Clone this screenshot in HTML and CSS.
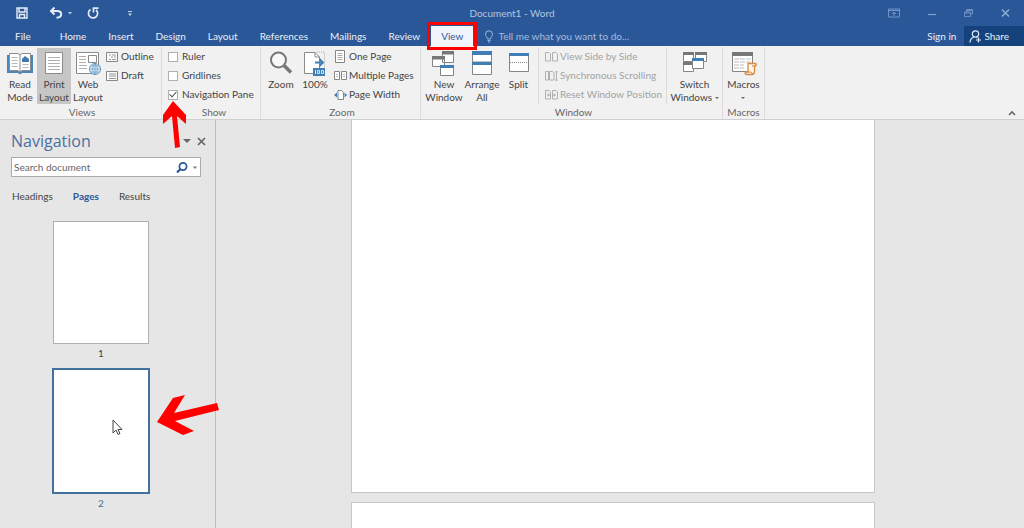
FILE: index.html
```html
<!DOCTYPE html>
<html lang="en">
<head>
<meta charset="utf-8">
<title>Document1 - Word</title>
<link rel="stylesheet" href="styles.css">
</head>
<body>
<div class="app">
<header class="titlebar">
  <div class="quick">
    <button class="bare" aria-label="Save"><svg width="12" height="12" viewBox="0 0 12 12" fill="none" stroke="#e6edf7" stroke-width="1.4"><path d="M1 1H11V11H1ZM3 1V5H9V1M3.500 11V7.500H8.500V11"/></svg></button>
    <button class="bare undo" aria-label="Undo"><svg width="24" height="12" viewBox="0 0 24 12"><path d="M5.500 .5L2 4L5.500 7.500M2.500 4H8Q12.200 4 12.200 7Q12.200 10.500 7.500 10.800" fill="none" stroke="#e6edf7" stroke-width="2"/><path d="M19 5H23L21 7.500Z" fill="#b9cbe6"/></svg></button>
    <button class="bare redo" aria-label="Repeat"><svg width="12" height="12" viewBox="0 0 12 12"><path d="M3.500 2.500A4.600 4.600 0 1 0 9 2.800M6.500 5.500V1.200H11.500" fill="none" stroke="#e6edf7" stroke-width="1.7"/></svg></button>
    <button class="bare more" aria-label="Customize toolbar"><svg width="6" height="7" viewBox="0 0 6 7" fill="#c4d3ea"><path d="M1 1H5V2H1ZM1 3.500H5L3 6Z"/></svg></button>
  </div>
  <div class="doc-name">Document1 - Word</div>
  <div class="window-buttons">
    <button class="bare" aria-label="Ribbon display options"><svg width="12" height="10" viewBox="0 0 12 10" fill="none" stroke="#7395c8"><path d="M.5 1H11.500V9H.5ZM1 2.500H11M6 8V4M4 6L6 4L8 6"/></svg></button>
    <button class="bare" aria-label="Minimize"><svg width="8" height="10" viewBox="0 0 8 10"><path d="M0 6.500H8" stroke="#7f9fce" stroke-width="1.200"/></svg></button>
    <button class="bare" aria-label="Restore"><svg width="9" height="10" viewBox="0 0 9 10" fill="none" stroke="#6b8ec4"><path d="M.5 4H6.500V8.500H.5ZM.5 5H6.500M2.500 4V1.500H8.500V6H7M2.500 2.500H8.500"/></svg></button>
    <button class="bare" aria-label="Close"><svg width="9" height="10" viewBox="0 0 9 10"><path d="M1 1.500L8 8.500M8 1.500L1 8.500" stroke="#8facd6" stroke-width="1.500"/></svg></button>
  </div>
</header>

<nav class="tabs">
  <button class="tab file">File</button>
  <button class="tab">Home</button>
  <button class="tab">Insert</button>
  <button class="tab">Design</button>
  <button class="tab">Layout</button>
  <button class="tab">References</button>
  <button class="tab">Mailings</button>
  <button class="tab">Review</button>
  <button class="tab active">View</button>
  <label class="tell"><svg width="10" height="13" viewBox="0 0 10 13" fill="none" stroke="#9db7de"><path d="M3.500 9C3.500 7 1.500 6.500 1.500 4.300A3.500 3.500 0 0 1 8.500 4.300C8.500 6.500 6.500 7 6.500 9ZM3.500 10.500H6.500M4 12H6"/></svg><input type="text" placeholder="Tell me what you want to do..." aria-label="Tell me what you want to do"></label>
  <a class="signin" href="#">Sign in</a>
  <button class="share"><svg width="13" height="13" viewBox="0 0 13 13" fill="none" stroke="#e6edf7" stroke-width="1.200"><circle cx="6.500" cy="4" r="3.200"/><path d="M1 12.500Q1.200 8.500 4.800 7M7.500 7.500L8.500 8M9.500 7.500V12.500M7 10H12"/></svg>Share</button>
</nav>

<section class="ribbon">
  <div class="group views">
    <div class="tools">
      <button class="big"><svg viewBox="0 0 28 28" width="28" height="28"><path d="M1 5H3V20H12L14 21.500L16 20H25V5H27V23H16L14 24.500L12 23H1Z" fill="#4a86b8"/><path d="M3.500 3.500H12L14 5L16 3.500H24.500V20.500H16L14 22L12 20.500H3.500Z" fill="#fff" stroke="#8c8c8c"/><path d="M14 5V21" stroke="#8c8c8c"/><path d="M5.500 7.500H11.500M5.500 10.500H11.500M5.500 13.500H11.500M5.500 16.500H11.500M16.500 14.500H22.500M16.500 17.500H22.500" stroke="#b8b8b8"/><path d="M16 12V9L19 6L23 9V12Z" fill="#3f79ad"/></svg><span>Read<br>Mode</span></button>
      <button class="big selected"><svg viewBox="0 0 28 28" width="28" height="28"><path d="M5.500 2.500H22.500V23.500H5.500Z" fill="#fff" stroke="#8a8a8a"/><path d="M8 7.500H20M8 10.500H20M8 13.500H20M8 16.500H20M8 19.500H20" stroke="#b0b0b0"/></svg><span>Print<br>Layout</span></button>
      <button class="big"><svg viewBox="0 0 28 28" width="28" height="28"><path d="M2.500 2.500H24.500V23.500H2.500Z" fill="#fff" stroke="#8a8a8a"/><path d="M5 6.500H12M5 9.500H12M5 12.500H12M5 15.500H13M5 18.500H13" stroke="#b0b0b0"/><path d="M14.500 5.500H22.500V12.500H14.500Z" fill="#fff" stroke="#8a8a8a"/><circle cx="21" cy="19" r="5.500" fill="#e8f1f8" stroke="#5b95c2"/><path d="M21 13.500V24.500M15.500 19H26.500M16.500 16H25.500M16.500 22H25.500M21 13.500Q16 19 21 24.500Q26 19 21 13.500" fill="none" stroke="#5b95c2" stroke-width=".7"/></svg><span>Web<br>Layout</span></button>
      <div class="stack">
        <button class="small"><svg width="13" height="12" viewBox="0 0 13 12"><path d="M.5 1.500H11.500V10.500H.5Z" fill="#fafafa" stroke="#858585"/><path d="M3 4H5M6 4H10M5 6H7M8 6H10M3 8.500H5M6 8.500H10" stroke="#9a9a9a"/></svg>Outline</button>
        <button class="small"><svg width="13" height="12" viewBox="0 0 13 12"><path d="M.5 1.500H11.500V10.500H.5Z" fill="#fafafa" stroke="#858585"/><path d="M3 4H10M3 6H10M3 8.500H10" stroke="#9a9a9a"/></svg>Draft</button>
      </div>
    </div>
    <div class="caption">Views</div>
  </div>

  <div class="group show">
    <div class="tools">
      <div class="stack">
        <label class="small check"><input type="checkbox">Ruler</label>
        <label class="small check"><input type="checkbox">Gridlines</label>
        <label class="small check"><input type="checkbox" checked>Navigation Pane
          <svg class="arrow-up" width="24" height="48" viewBox="0 0 24 48" aria-hidden="true"><path d="M10 0L23 14V23L14 15L17 46L12 47L9 15L0 23V14Z" fill="#fe0000"/></svg>
        </label>
      </div>
    </div>
    <div class="caption">Show</div>
  </div>

  <div class="group zoom">
    <div class="tools">
      <button class="big"><svg viewBox="0 0 28 28" width="28" height="28"><circle cx="11.500" cy="10" r="7.500" fill="#f8f8f8" stroke="#777" stroke-width="2"/><path d="M17 15.500L24 22.500" stroke="#777" stroke-width="3.500"/></svg><span>Zoom</span></button>
      <button class="big"><svg viewBox="0 0 28 28" width="28" height="28"><path d="M3.500 2.500H14L18.500 7V23.500H3.500Z" fill="#fff" stroke="#8a8a8a"/><path d="M14 2.500V7H18.500" fill="none" stroke="#8a8a8a"/><path d="M16 2H23.500V18" fill="none" stroke="#aaa" stroke-dasharray="1 1"/><path d="M14 12.500H22M18.500 9L22 12.500L18.500 16" fill="none" stroke="#3f7fb5" stroke-width="1.800"/><path d="M12 18H24V26H12Z" fill="#3f7fb5"/><path d="M14.500 20V24M16.500 20.500H18.500V23.500H16.500ZM20.500 20.500H22.500V23.500H20.500Z" fill="none" stroke="#d7e6f2"/></svg><span>100%</span></button>
      <div class="stack">
        <button class="small"><svg width="13" height="13" viewBox="0 0 13 13"><path d="M1.500 .5H10.500V12.500H1.500Z" fill="#fff" stroke="#858585"/><path d="M3.500 3.500H8.500M3.500 5.500H8.500M3.500 7.500H8.500M3.500 9.500H8.500" stroke="#aaa"/></svg>One Page</button>
        <button class="small"><svg width="13" height="12" viewBox="0 0 13 12"><path d="M.5 1.500H5.500V9.500H.5ZM7.500 1.500H12.500V9.500H7.500Z" fill="#fff" stroke="#858585"/><path d="M2 4.500H4M2 6.500H4M9 4.500H11M9 6.500H11" stroke="#bbb"/></svg>Multiple Pages</button>
        <button class="small"><svg width="13" height="12" viewBox="0 0 13 12"><path d="M4 1.500H7.500L9.500 3.500V10.500H4Z" fill="#fff" stroke="#858585"/><path d="M3 3.500V8.500L0 6ZM10.500 3.500V8.500L13 6Z" fill="#3f7fb5"/></svg>Page Width</button>
      </div>
    </div>
    <div class="caption">Zoom</div>
  </div>

  <div class="group window">
    <div class="tools">
      <button class="big"><svg viewBox="0 0 28 28" width="28" height="28"><path d="M12.500 2.500H23.500V12.500H12.500ZM2.500 7.500H14.500V16.500H2.500Z" fill="#fff" stroke="#858585"/><path d="M12 1H24V4.500H12ZM2 6H15V9.500H2Z" fill="#777"/><path d="M10.500 15.500H23.500V25.500H10.500Z" fill="#fff" stroke="#858585"/><path d="M10 15H24V18H10Z" fill="#3f7fb5"/></svg><span>New<br>Window</span></button>
      <button class="big"><svg viewBox="0 0 28 28" width="28" height="28"><path d="M4.500 1.500H23.500V12H4.500ZM4.500 12.500H23.500V24.500H4.500Z" fill="#fff" stroke="#858585"/><path d="M4 1H24V5H4ZM4 12H24V15H4Z" fill="#3f7fb5"/></svg><span>Arrange<br>All</span></button>
      <button class="big split"><svg viewBox="0 0 28 28" width="28" height="28"><path d="M4.500 3.500H23.500V21.500H4.500Z" fill="#fff" stroke="#858585"/><path d="M4 3H24V6H4Z" fill="#3f7fb5"/><path d="M5 12.500H23" stroke="#888" stroke-dasharray="1 1"/></svg><span>Split</span></button>
      <div class="stack disabled">
        <button class="small" disabled><svg width="13" height="12" viewBox="0 0 13 12" fill="none" stroke="#b0b0b0"><path d="M.5 1.500H4L5.500 3V10H.5ZM7.500 1.500H11L12.500 3V10H7.500Z"/></svg>View Side by Side</button>
        <button class="small" disabled><svg width="13" height="12" viewBox="0 0 13 12" fill="none" stroke="#b0b0b0"><path d="M.5 1.500H3.500V10H.5ZM4.500 1.500H7.500L9 3V10H4.500ZM11.500 1V11M10 2.500L11.500 1L13 2.500M10 9.500L11.500 11L13 9.500"/></svg>Synchronous Scrolling</button>
        <button class="small" disabled><svg width="13" height="12" viewBox="0 0 13 12" fill="none" stroke="#b0b0b0"><path d="M.5 1.500H4L5.500 3V10H.5ZM7.500 1.500H11L12.500 3V10H7.500ZM2 6H5M8 6H11M3.500 4.500V7.500M9.500 4.500V7.500"/></svg>Reset Window Position</button>
      </div>
      <button class="big switch"><svg viewBox="0 0 28 28" width="28" height="28"><path d="M2.500 2.500H12.500V11.500H2.500ZM14.500 2.500H25.500V11.500H14.500ZM2.500 12.500H12.500V21.500H2.500Z" fill="#fff" stroke="#858585"/><path d="M2 2H13V5H2ZM14 2H26V5H14ZM2 12H13V15H2Z" fill="#777"/><path d="M11.500 8.500H22.500V18.500H11.500Z" fill="#fff" stroke="#858585"/><path d="M11 8H23V11H11Z" fill="#3f7fb5"/></svg><span>Switch<br>Windows <i class="caret"></i></span></button>
    </div>
    <div class="caption">Window</div>
  </div>

  <div class="group macros">
    <div class="tools">
      <button class="big"><svg viewBox="0 0 28 28" width="28" height="28"><path d="M2.500 2.500H22.500V21.500H2.500Z" fill="#fff" stroke="#858585"/><path d="M2 2H23V6H2Z" fill="#777"/><path d="M4 9H9M10 9H15M16 9H21M4 12H9M10 12H15M16 12H21M4 15H9M10 15H14M4 18H9M10 18H14" stroke="#bbb"/><path d="M18 13.500H25.500Q27 14 25.500 16H24.500V22Q24 24.500 22 24.500H16Q14.500 24 15.500 22H18Z" fill="#fdf3e6" stroke="#d58b3f" stroke-width="1.300"/><path d="M16 22H21Q21.500 24 23 24M24.500 16H22" fill="none" stroke="#d58b3f"/></svg><span>Macros<br><i class="caret"></i></span></button>
    </div>
    <div class="caption">Macros</div>
  </div>
  <button class="bare collapse" aria-label="Collapse the ribbon"><svg width="8" height="6" viewBox="0 0 8 6"><path d="M1 5L4 2L7 5" fill="none" stroke="#666" stroke-width="1.600"/></svg></button>
</section>

<div class="workspace">
  <aside class="navigation">
    <div class="nav-head">
      <h1>Navigation</h1>
      <button class="bare" aria-label="Pane options"><svg width="8" height="5" viewBox="0 0 8 5"><path d="M0 0H8L4 4Z" fill="#666"/></svg></button>
      <button class="bare" aria-label="Close pane"><svg width="9" height="9" viewBox="0 0 9 9"><path d="M1 1L8 8M8 1L1 8" stroke="#666" stroke-width="1.700"/></svg></button>
    </div>
    <div class="search">
      <input type="text" placeholder="Search document" aria-label="Search document">
      <button class="bare" aria-label="Search"><svg width="21" height="11" viewBox="0 0 21 11"><circle cx="7" cy="4.500" r="3.600" fill="none" stroke="#2b579a" stroke-width="1.700"/><path d="M4.500 7L1 10.500" stroke="#2b579a" stroke-width="2.200"/><path d="M17 4.500H21L19 7Z" fill="#777"/></svg></button>
    </div>
    <div class="nav-tabs">
      <button class="bare">Headings</button>
      <button class="bare current">Pages</button>
      <button class="bare">Results</button>
    </div>
    <div class="thumbs">
      <button class="thumb" aria-label="Page 1"></button>
      <span class="number">1</span>
      <button class="thumb chosen" aria-label="Page 2">
        <svg class="cursor" width="11" height="17" viewBox="0 0 11 17"><path d="M1 1V14L4 11L6 15.500L8 14.500L6 10.500H10Z" fill="#fff" stroke="#444"/></svg>
        <svg class="arrow-left" width="62" height="41" viewBox="0 0 62 41"><path d="M0 27L16 3L28 0L17 18L60 8L62 15L18 26L37 36L26 40Z" fill="#fe0000"/></svg>
      </button>
      <span class="number chosen-number">2</span>
    </div>
  </aside>
  <main class="canvas">
    <div class="paper first"></div>
    <div class="paper next"></div>
  </main>
</div>
</div>
</body>
</html>
```

FILE: styles.css
```css
* { box-sizing: border-box; }

body {
  margin: 0;
  font: 10px/13px Lato, "Open Sans", sans-serif;
  color: #444;
}

button, input { font: inherit; color: inherit; }
button { border: 0; padding: 0; background: none; }
svg { display: block; flex: none; }

.app {
  display: flex;
  flex-direction: column;
  height: 100vh;
  overflow: hidden;
  background: #e6e6e6;
}

.titlebar {
  display: grid;
  grid-template-columns: 1fr auto 1fr;
  align-items: center;
  height: 26px;
  flex: none;
  background: #2a5797;
}
.quick { display: flex; align-items: center; padding-left: 16px; }
.undo { margin-left: 21px; }
.redo { margin-left: 14px; }
.more { margin-left: 28px; }
.doc-name { color: #b4c6e1; }
.window-buttons { display: flex; justify-content: flex-end; align-items: center; gap: 28px; padding-right: 14px; }

.tabs {
  display: flex;
  height: 20px;
  flex: none;
  background: #2a5797;
  color: #e9eff8;
}
.tab { padding: 0 11px; }
.file { padding: 0 18px 0 15px; }
.active {
  padding: 0 10px;
  background: #f1f5fb;
  color: #2b579a;
  outline: 3px solid #fe0000;
  outline-offset: 1px;
  position: relative;
  z-index: 2;
}
.tell { display: flex; align-items: center; flex: 1; gap: 4px; padding-left: 11px; }
.tell input { flex: 1; min-width: 0; border: 0; padding: 0; background: none; }
.tell input::placeholder { color: #a5bcdf; opacity: 1; }
.signin { align-self: center; color: inherit; text-decoration: none; margin-right: 8px; }
.share { display: flex; align-items: center; gap: 2px; padding: 0 15px 0 5px; background: #14427c; }

.ribbon {
  display: flex;
  flex: none;
  height: 74px;
  padding-top: 1px;
  background: #f1f1f1;
  border-bottom: 1px solid #cfcfcf;
}
.group { display: flex; flex-direction: column; border-right: 1px solid #dcdcdc; }
.tools { display: flex; flex: 1; align-items: flex-start; }
.caption { text-align: center; color: #666; line-height: 13px; }
.views { width: 162px; padding-left: 3px; }
.show { width: 99px; padding-left: 6px; }
.zoom { width: 160px; padding-left: 3px; }
.window { width: 302px; padding-left: 4px; }
.macros { width: 42px; }

.big {
  display: flex;
  flex-direction: column;
  align-items: center;
  width: 34px;
  margin-top: 1px;
  padding-top: 2px;
  white-space: nowrap;
}
.big span { min-height: 26px; }
.selected { background: #c6c6c6; }
.window .big { width: 38px; }
.window .split { width: 35px; }
.window .switch { flex: 1; }
.macros .big { width: 100%; }

.stack { display: flex; flex-direction: column; }
.views .stack { padding-left: 1px; }
.small { display: flex; align-items: center; gap: 2px; height: 19px; white-space: nowrap; }
.zoom .stack { padding-left: 2px; }
.disabled { margin-left: 2px; padding: 0 4px 0 6px; border: solid #dcdcdc; border-width: 0 1px; color: #a3a3a3; }

.check { position: relative; gap: 4px; }
.check input {
  appearance: none;
  width: 10px;
  height: 10px;
  margin: 0;
  border: 1px solid #b0b0b0;
  background: #fff;
}
.check input:checked { display: grid; place-items: center; }
.check input:checked::before {
  content: "";
  width: 3px;
  height: 6px;
  margin-top: -2px;
  border: solid #555;
  border-width: 0 1px 1px 0;
  transform: rotate(42deg);
}
.arrow-up { position: absolute; left: -5px; top: 16px; z-index: 3; }

.caret {
  display: inline-block;
  border: 2px solid transparent;
  border-top-color: #666;
  border-bottom: 0;
  vertical-align: 2px;
}
.collapse { margin: auto 8px 3px auto; }

.workspace { display: flex; flex: 1; min-height: 0; }
.navigation { width: 216px; flex: none; padding: 11px 14px 0 11px; border-right: 1px solid #bdbdbd; }
.nav-head { display: flex; align-items: center; gap: 6px; margin-right: -5px; }
.nav-head h1 { flex: 1; margin: 0; font: 400 16px/20px "Open Sans", sans-serif; color: #4a6fa5; }
.search { display: flex; align-items: center; height: 20px; margin-top: 6px; padding: 0 3px 0 2px; border: 1px solid #ababab; background: #fff; }
.search input { flex: 1; min-width: 0; border: 0; padding: 0; background: none; }
.search input::placeholder { color: #666; opacity: 1; }
.nav-tabs { display: flex; gap: 20px; margin-top: 13px; padding-left: 1px; }
.current { color: #2b579a; font-weight: 700; }
.thumbs { display: flex; flex-direction: column; align-items: center; margin: 18px 10px 0 0; }
.thumb { position: relative; width: 96px; height: 123px; background: #fff; border: 1px solid #b0b0b0; }
.number { margin: 3px 0 8px; }
.chosen { width: 98px; height: 126px; border: 2px solid #41719c; }
.chosen-number { color: #41719c; margin-top: 3px; }
.cursor { position: absolute; left: 58px; top: 49px; }
.arrow-left { position: absolute; left: 103px; top: 25px; z-index: 3; }

.canvas { display: flex; flex-direction: column; align-items: center; gap: 9px; flex: 1; padding-right: 14px; }
.paper { width: 66%; background: #fff; border: 1px solid #c8c8c8; }
.first { flex: none; height: 373px; border-top: 0; }
.next { flex: 1; border-bottom: 0; }
```
